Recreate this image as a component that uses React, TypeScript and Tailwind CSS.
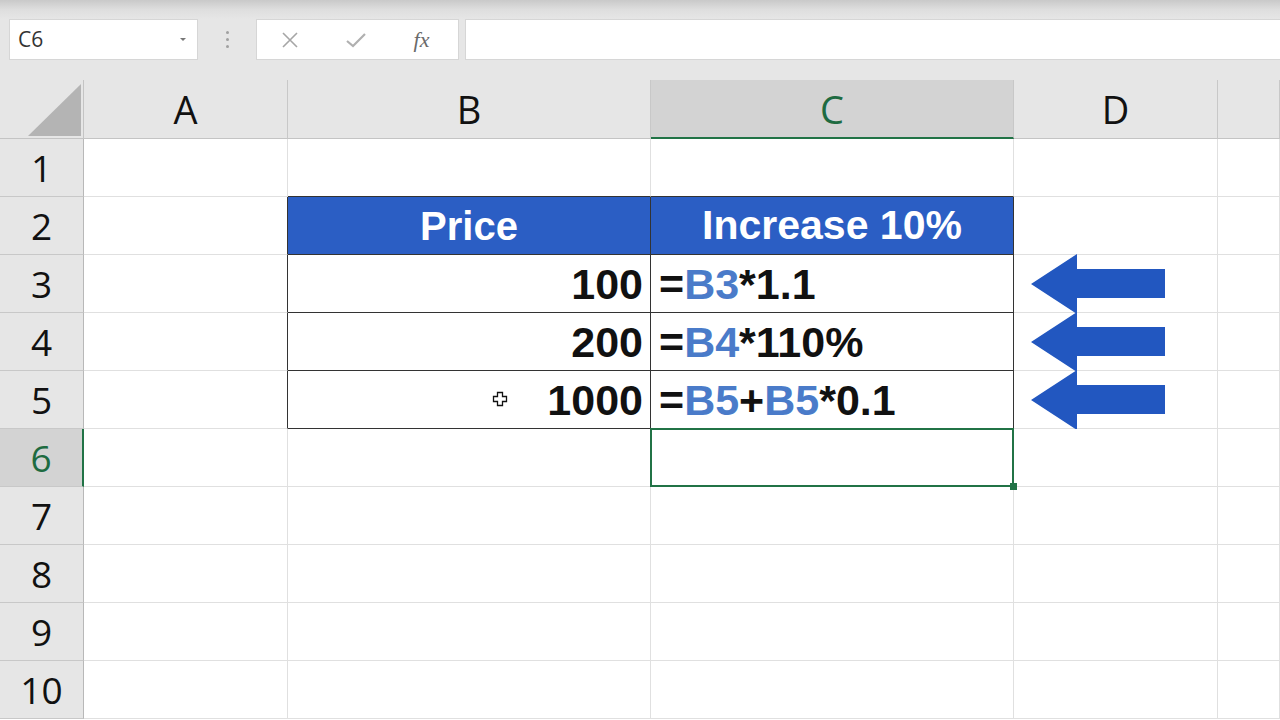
import React from "react";

const ui = { fontFamily: '"Open Sans", "Noto Sans", sans-serif' };
const cellFont = { fontFamily: '"Liberation Sans", Arial, sans-serif' };

const colW = ["w-[204px]", "w-[363px]", "w-[363px]", "w-[204px]", "flex-1"];

function Arrow() {
  return (
    <svg
      className="absolute left-[17px] top-[-1px]"
      width="136"
      height="60"
      viewBox="0 0 136 60"
    >
      <polygon points="0,30 46,0 46,15 134,15 134,44 46,44 46,60" fill="#2257c0" />
    </svg>
  );
}

function Ref({ children }: { children: React.ReactNode }) {
  return <span className="text-[#4a7bc9]">{children}</span>;
}

function CursorIcon() {
  return (
    <svg className="absolute left-[204px] top-[20px]" width="16" height="16" viewBox="0 0 16 16">
      <path
        d="M5.5 1.5h5v4h4v5h-4v4h-5v-4h-4v-5h4z"
        fill="#ffffff"
        stroke="#111111"
        strokeWidth="1.3"
      />
    </svg>
  );
}

export default function App() {
  const rows = [1, 2, 3, 4, 5, 6, 7, 8, 9, 10];

  const renderCell = (r: number, c: number) => {
    const inTable = (c === 1 || c === 2) && r >= 2 && r <= 5;
    const darkRight = inTable || (c === 0 && r >= 2 && r <= 5);
    const darkBottom = inTable || ((c === 1 || c === 2) && r === 1);
    const isHeader = inTable && r === 2;
    const rightCls = darkRight ? "border-r-[#333333]" : "border-r-[#e0e0e0]";
    const bottomCls = darkBottom ? "border-b-[#333333]" : "border-b-[#e0e0e0]";
    const bg = isHeader ? "bg-[#2b5ec4]" : "bg-white";

    let content: React.ReactNode = null;
    if (r === 2 && c === 1) content = <span className="text-white text-[40px] font-bold w-full text-center">Price</span>;
    if (r === 2 && c === 2) content = <span className="text-white text-[41px] font-bold w-full text-center">Increase 10%</span>;
    if (c === 1 && r >= 3 && r <= 5) {
      const v = r === 3 ? "100" : r === 4 ? "200" : "1000";
      content = <span className="text-[#111] text-[43px] font-bold w-full text-right pr-[7px] pt-[2px]">{v}</span>;
    }
    if (c === 2 && r === 3)
      content = (
        <span className="text-[#111] text-[43px] font-bold pl-[8px] pt-[2px]">
          =<Ref>B3</Ref>*1.1
        </span>
      );
    if (c === 2 && r === 4)
      content = (
        <span className="text-[#111] text-[43px] font-bold pl-[8px] pt-[2px]">
          =<Ref>B4</Ref>*110%
        </span>
      );
    if (c === 2 && r === 5)
      content = (
        <span className="text-[#111] text-[43px] font-bold pl-[8px] pt-[2px]">
          =<Ref>B5</Ref>+<Ref>B5</Ref>*0.1
        </span>
      );

    return (
      <div
        key={c}
        className={`relative h-[58px] shrink-0 flex items-center border-r border-b ${rightCls} ${bottomCls} ${bg} ${colW[c]} ${
          c === 2 && r === 6 ? "z-10" : ""
        }`}
        style={cellFont}
      >
        {content}
        {c === 1 && r === 5 && <CursorIcon />}
        {c === 3 && r >= 3 && r <= 5 && <Arrow />}
        {c === 2 && r === 6 && (
          <>
            <div className="absolute left-[-1px] top-[-1px] right-[-1px] bottom-[-1px] border-2 border-[#217346]" />
            <div className="absolute right-[-4px] bottom-[-4px] w-[7px] h-[7px] bg-[#217346]" />
          </>
        )}
      </div>
    );
  };

  return (
    <div className="w-[1280px] h-[720px] overflow-hidden bg-white select-none" style={ui}>
      <div className="h-[80px] bg-[#e6e6e6] flex flex-col">
        <div className="h-[19px] bg-gradient-to-b from-[#c9c9c9] via-[#dedede] to-[#e6e6e6]" />
        <div className="h-[41px] flex items-stretch">
          <div className="ml-[9px] w-[189px] bg-white border border-[#d6d6d6] flex items-center justify-between pl-[8px] pr-[10px]">
            <span className="text-[21px] text-[#333333] leading-none">C6</span>
            <svg width="8" height="5" viewBox="0 0 8 5">
              <polygon points="1,1 7,1 4,4" fill="#777777" />
            </svg>
          </div>
          <div className="w-[58px] flex flex-col items-center justify-center gap-[4px]">
            <div className="w-[3px] h-[3px] rounded-full bg-[#a0a0a0]" />
            <div className="w-[3px] h-[3px] rounded-full bg-[#a0a0a0]" />
            <div className="w-[3px] h-[3px] rounded-full bg-[#a0a0a0]" />
          </div>
          <div className="w-[203px] bg-white border border-[#d6d6d6] flex items-center">
            <div className="w-[65px] flex justify-center">
              <svg width="18" height="18" viewBox="0 0 18 18">
                <path d="M2 2L16 16M16 2L2 16" stroke="#a6a6a6" strokeWidth="1.6" />
              </svg>
            </div>
            <div className="w-[67px] flex justify-center">
              <svg width="22" height="18" viewBox="0 0 22 18">
                <path d="M2 10L8 15L20 3" stroke="#b0b0b0" strokeWidth="2.2" fill="none" />
              </svg>
            </div>
            <div className="flex-1 flex justify-center pr-[4px]">
              <span
                className="text-[22px] italic text-[#6a6a6a] leading-none"
                style={{ fontFamily: '"Liberation Serif", "Times New Roman", serif' }}
              >
                fx
              </span>
            </div>
          </div>
          <div className="ml-[6px] flex-1 bg-white border border-[#d6d6d6] border-r-0" />
        </div>
      </div>

      <div className="flex h-[59px] bg-[#e6e6e6]">
        <div className="w-[84px] shrink-0 relative border-r border-b border-[#c4c4c4]">
          <svg className="absolute left-0 top-0" width="84" height="59" viewBox="0 0 84 59">
            <polygon points="28,56 81,56 81,4" fill="#b4b4b4" />
          </svg>
        </div>
        {["A", "B", "C", "D", ""].map((l, i) => (
          <div
            key={i}
            className={`h-[59px] shrink-0 flex items-center justify-center border-r border-[#c8c8c8] ${colW[i]} ${
              i === 2
                ? "bg-[#d3d3d3] border-b-2 border-b-[#217346] text-[#1e6b41]"
                : "border-b border-b-[#c4c4c4] text-[#111111]"
            }`}
          >
            <span className="text-[38px] leading-none">{l}</span>
          </div>
        ))}
      </div>

      {rows.map((r) => (
        <div key={r} className="flex h-[58px]">
          <div
            className={`w-[84px] shrink-0 flex items-center justify-center border-b border-b-[#c8c8c8] ${
              r === 6
                ? "bg-[#d3d3d3] border-r-2 border-r-[#217346] text-[#1e6b41]"
                : "bg-[#e6e6e6] border-r border-r-[#b8b8b8] text-[#111111]"
            }`}
          >
            <span className="text-[37px] leading-none">{r}</span>
          </div>
          {[0, 1, 2, 3, 4].map((c) => renderCell(r, c))}
        </div>
      ))}
    </div>
  );
}
